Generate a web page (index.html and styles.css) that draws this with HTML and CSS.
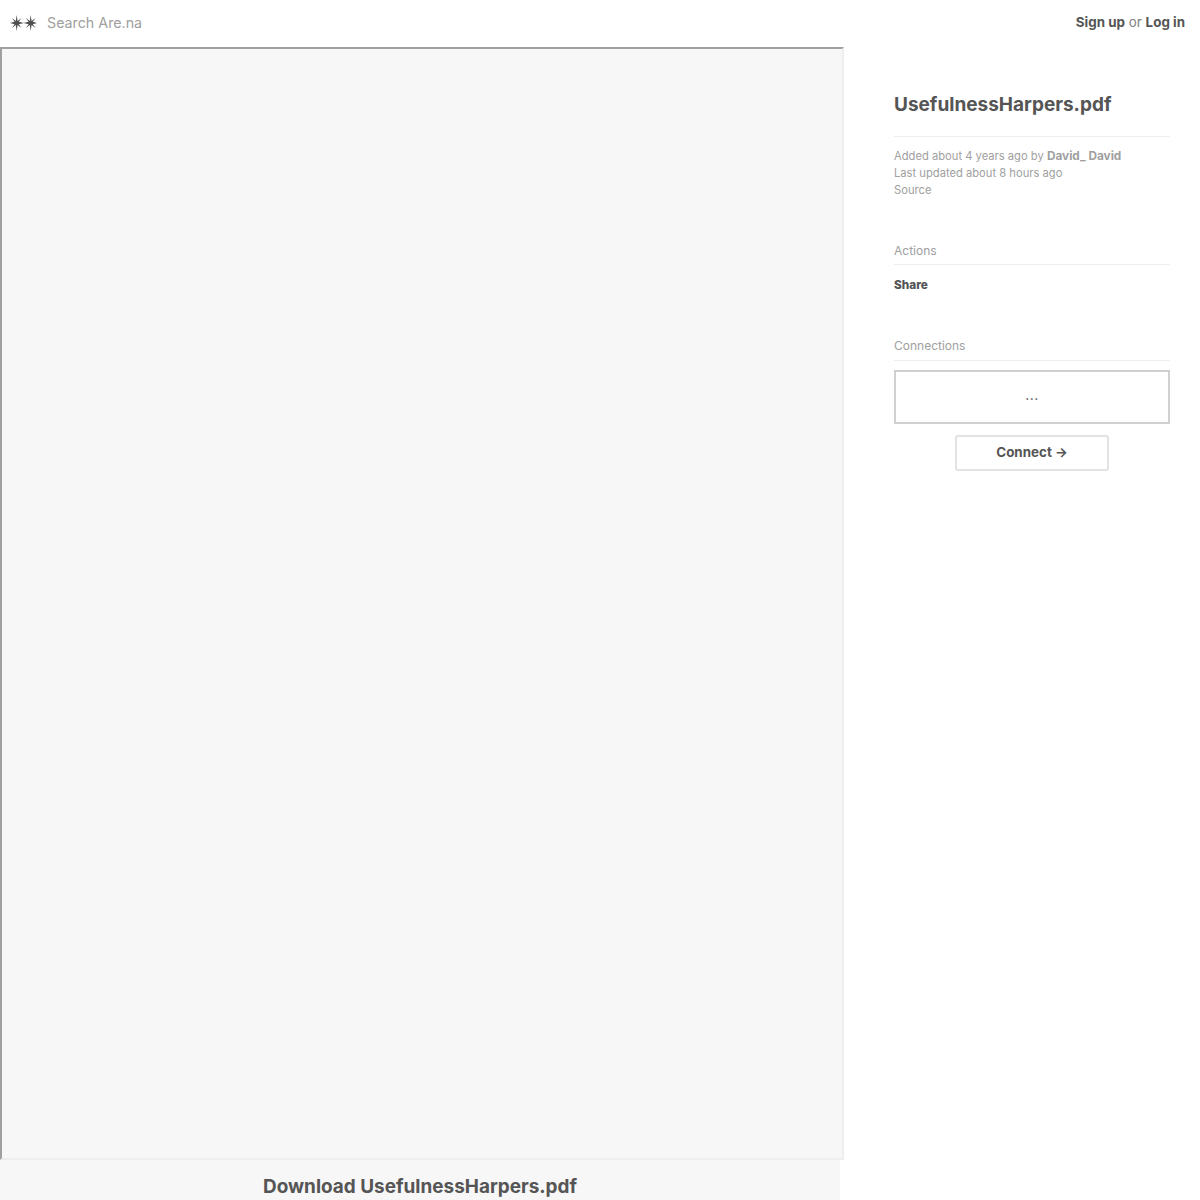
FILE: index.html
```html
<!DOCTYPE html>
<html lang="en">
<head>
  <meta charset="UTF-8">
  <title>UsefulnessHarpers.pdf</title>
  <link rel="stylesheet" href="styles.css">
</head>
<body>
  <div class="page">
    <div class="left">
      <header class="topbar">
        <svg class="logo" width="27" height="16" viewBox="0 0 27 16" aria-hidden="true">
          <g fill="#505050">
            <path d="M6.7 0 L7.6 5.9 L11.6 3 L8.8 6.8 L14 8 L8.8 9.2 L11.6 13 L7.6 10.1 L6.7 16 L5.8 10.1 L1.8 13 L4.6 9.2 L0 8 L4.6 6.8 L1.8 3 L5.8 5.9 Z"/>
            <path d="M20.7 0 L21.6 5.9 L25.6 3 L22.8 6.8 L27 8 L22.8 9.2 L25.6 13 L21.6 10.1 L20.7 16 L19.8 10.1 L15.8 13 L18.6 9.2 L13.5 8 L18.6 6.8 L15.8 3 L19.8 5.9 Z"/>
          </g>
        </svg>
        <span class="search">Search Are.na</span>
      </header>
      <div class="viewer"></div>
      <a class="download">Download UsefulnessHarpers.pdf</a>
    </div>

    <aside class="sidebar">
      <div class="auth"><b>Sign up</b> or <b>Log in</b></div>
      <h1 class="title">UsefulnessHarpers.pdf</h1>
      <div class="meta">
        <div>Added about 4 years ago by <b>David_ David</b></div>
        <div>Last updated about 8 hours ago</div>
        <div>Source</div>
      </div>
      <h2 class="section-head actions-head">Actions</h2>
      <div class="share">Share</div>
      <h2 class="section-head connections-head">Connections</h2>
      <div class="connections-box">...</div>
      <div class="connect-wrap">
        <button class="connect">Connect →</button>
      </div>
    </aside>
  </div>
</body>
</html>
```

FILE: styles.css
```css
html, body {
  margin: 0;
  padding: 0;
  background: #fff;
}

body {
  font-family: Inter, "Liberation Sans", sans-serif;
  color: #555;
}

.page {
  display: flex;
  height: 1200px;
  overflow: hidden;
}

.left {
  width: 844px;
  flex: none;
  display: flex;
  flex-direction: column;
}

.topbar {
  height: 45px;
  margin-bottom: 2px;
  flex: none;
  display: flex;
  align-items: center;
  padding-left: 10px;
  box-sizing: border-box;
}

.logo {
  margin-right: 10px;
}

.search {
  font-size: 14.25px;
  color: #a0a0a0;
}

.viewer {
  height: 1113px;
  flex: none;
  box-sizing: border-box;
  background: #f7f7f7;
  border-style: solid;
  border-width: 2px;
  border-color: #a0a0a0 #eee #eee #a0a0a0;
}

.download {
  display: block;
  width: 840px;
  height: 40px;
  flex: none;
  background: #f7f7f7;
  text-align: center;
  font-size: 18.95px;
  font-weight: 700;
  line-height: 53px;
  color: #555;
}

.sidebar {
  flex: 1;
  position: relative;
  padding: 0 30px 0 50px;
  box-sizing: border-box;
}

.auth {
  position: absolute;
  top: 13px;
  right: 15px;
  font-size: 13.4px;
  line-height: 18px;
  color: #808080;
}

.auth b {
  color: #555;
}

.title {
  margin: 93px 0 0;
  padding-bottom: 19px;
  border-bottom: 1px solid #eee;
  font-size: 19px;
  line-height: 24px;
  font-weight: 700;
}

.meta {
  margin-top: 11px;
  font-size: 11.2px;
  line-height: 17px;
  color: #a0a0a0;
}

.meta b {
  font-size: 11.8px;
}

.section-head {
  margin: 0;
  font-size: 12px;
  line-height: 18px;
  font-weight: 400;
  color: #a0a0a0;
  border-bottom: 1px solid #eee;
}

.actions-head {
  margin-top: 43px;
  padding-bottom: 4px;
}

.share {
  margin-top: 12px;
  font-size: 11.8px;
  line-height: 16px;
  font-weight: 800;
}

.connections-head {
  margin-top: 44px;
  padding-bottom: 5px;
}

.connections-box {
  margin-top: 9px;
  height: 54px;
  box-sizing: border-box;
  border: 2px solid #d0d0d0;
  text-align: center;
  font-size: 14px;
  line-height: 45px;
  letter-spacing: 0.5px;
}

.connect-wrap {
  margin-top: 11px;
  display: flex;
  justify-content: center;
}

.connect {
  width: 154px;
  height: 36px;
  background: #fff;
  border: 2px solid #e2e2e2;
  border-radius: 3px;
  font-family: inherit;
  font-size: 13.4px;
  font-weight: 700;
  color: #555;
  padding: 0 0 3px;
}
```
